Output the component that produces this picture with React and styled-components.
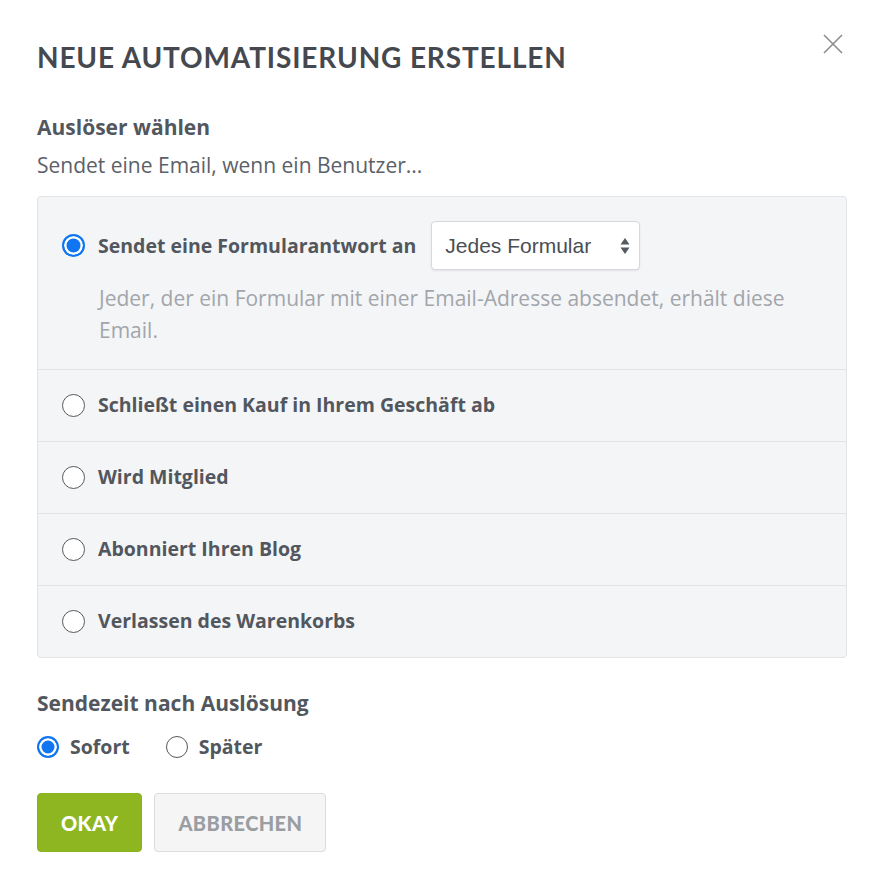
import React, { useState } from "react";
import styled, { createGlobalStyle } from "styled-components";

const GlobalStyle = createGlobalStyle`
  body {
    margin: 0;
    background: #fff;
    font-family: "Open Sans", "Liberation Sans", sans-serif;
  }
`;

const Modal = styled.div`
  position: relative;
  width: 883px;
  padding: 35px 36px 28px 37px;
  box-sizing: border-box;
`;

const Title = styled.h1`
  margin: 0;
  font-family: "Lato", "Open Sans", sans-serif;
  font-weight: 700;
  font-size: 28px;
  letter-spacing: 0.85px;
  color: #45494f;
  line-height: 44px;
`;

const CloseButton = styled.button`
  position: absolute;
  top: 33px;
  right: 39px;
  width: 22px;
  height: 22px;
  padding: 0;
  border: 0;
  background: none;
  cursor: pointer;
`;

const Label = styled.h2`
  margin: ${(p) => p.$top || 0}px 0 0;
  font-size: 21px;
  font-weight: 700;
  color: #52575e;
  line-height: 28px;
`;

const Hint = styled.p`
  margin: 10px 0 17px;
  font-size: 21px;
  color: #5c6168;
  line-height: 28px;
`;

const Panel = styled.div`
  width: 810px;
  box-sizing: border-box;
  border: 1px solid #e1e3e6;
  border-radius: 4px;
  background: #f4f5f7;
`;

const Row = styled.div`
  display: flex;
  flex-direction: column;
  padding: ${(p) => (p.$open ? "24px 24px 23px" : "21px 24px")};
  border-top: ${(p) => (p.$first ? "none" : "1px solid #e1e3e6")};
  min-height: ${(p) => (p.$open ? "auto" : "29px")};
  cursor: pointer;
`;

const RowHead = styled.div`
  display: flex;
  align-items: center;
  gap: 13px;
`;

const Radio = styled.span`
  flex: none;
  width: ${(p) => p.$size || 23}px;
  height: ${(p) => p.$size || 23}px;
  box-sizing: border-box;
  border-radius: 50%;
  background: ${(p) => (p.$checked ? "#0f75f0" : "#fff")};
  border: ${(p) => (p.$checked ? "2px solid #0f75f0" : "1.5px solid #55595e")};
  box-shadow: ${(p) => (p.$checked ? "inset 0 0 0 2.5px #fff" : "none")};
`;

const OptionText = styled.span`
  font-size: 19.5px;
  font-weight: 700;
  color: #52575e;
  line-height: 28px;
`;

const Select = styled.div`
  display: flex;
  align-items: center;
  justify-content: space-between;
  margin-left: 2px;
  width: 209px;
  height: 49px;
  box-sizing: border-box;
  padding: 0 9px 0 13px;
  background: #fff;
  border: 1px solid #d6d8db;
  border-radius: 4px;
  box-shadow: 0 1px 2px rgba(0, 0, 0, 0.08);
  font-family: "Liberation Sans", Arial, sans-serif;
  font-size: 21px;
  color: #4a4e54;
`;

const Description = styled.p`
  margin: 12px 0 0 37px;
  font-size: 21px;
  color: #a2a6ab;
  line-height: 32px;
`;

const RadioGroup = styled.div`
  display: flex;
  align-items: center;
  gap: 36px;
  margin-top: 16px;
`;

const InlineOption = styled.label`
  display: flex;
  align-items: center;
  gap: 11px;
  cursor: pointer;
`;

const Actions = styled.div`
  display: flex;
  gap: 12px;
  margin-top: 32px;
`;

const Button = styled.button`
  height: 59px;
  padding: 0 23px;
  border-radius: 4px;
  border: 1px solid ${(p) => (p.$primary ? "#8ab41f" : "#dadcdf")};
  background: ${(p) => (p.$primary ? "#8db621" : "#f5f5f6")};
  color: ${(p) => (p.$primary ? "#fff" : "#9a9da2")};
  font-family: "Lato", "Open Sans", sans-serif;
  font-weight: 900;
  font-size: 20px;
  letter-spacing: 0.4px;
  cursor: pointer;
`;

const triggers = [
  "Sendet eine Formularantwort an",
  "Schließt einen Kauf in Ihrem Geschäft ab",
  "Wird Mitglied",
  "Abonniert Ihren Blog",
  "Verlassen des Warenkorbs",
];

export default function App() {
  const [trigger, setTrigger] = useState(0);
  const [timing, setTiming] = useState("now");

  return (
    <Modal>
      <GlobalStyle />
      <Title>NEUE AUTOMATISIERUNG ERSTELLEN</Title>
      <CloseButton aria-label="Schließen">
        <svg width="22" height="22" viewBox="0 0 22 22">
          <path d="M2 2L20 20M20 2L2 20" stroke="#8a8d91" strokeWidth="1.6" />
        </svg>
      </CloseButton>

      <Label $top={34}>Auslöser wählen</Label>
      <Hint>Sendet eine Email, wenn ein Benutzer...</Hint>

      <Panel>
        {triggers.map((t, i) => (
          <Row key={t} $first={i === 0} $open={i === 0} onClick={() => setTrigger(i)}>
            <RowHead>
              <Radio $checked={trigger === i} />
              <OptionText>{t}</OptionText>
              {i === 0 && (
                <Select>
                  Jedes Formular
                  <svg width="10" height="22" viewBox="0 0 10 22">
                    <path d="M5 3L9.5 9.5H0.5Z M5 19L9.5 12.5H0.5Z" fill="#555a60" />
                  </svg>
                </Select>
              )}
            </RowHead>
            {i === 0 && (
              <Description>
                Jeder, der ein Formular mit einer Email-Adresse absendet, erhält diese Email.
              </Description>
            )}
          </Row>
        ))}
      </Panel>

      <Label $top={31}>Sendezeit nach Auslösung</Label>
      <RadioGroup>
        <InlineOption onClick={() => setTiming("now")}>
          <Radio $size={22} $checked={timing === "now"} />
          <OptionText>Sofort</OptionText>
        </InlineOption>
        <InlineOption onClick={() => setTiming("later")}>
          <Radio $size={22} $checked={timing === "later"} />
          <OptionText>Später</OptionText>
        </InlineOption>
      </RadioGroup>

      <Actions>
        <Button $primary>OKAY</Button>
        <Button>ABBRECHEN</Button>
      </Actions>
    </Modal>
  );
}
